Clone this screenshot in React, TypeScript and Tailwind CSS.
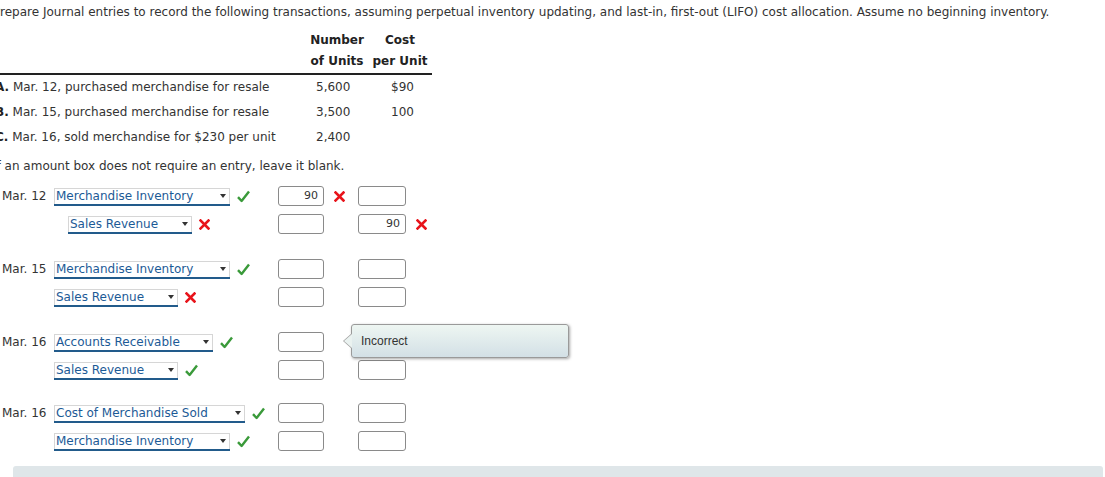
import React from 'react'

type Mark = 'ok' | 'bad' | null

interface Entry {
  date?: string
  account: string
  selectW: number
  indent?: boolean
  mark: Mark
  debit?: string
  debitMark?: Mark
  credit?: string
  creditMark?: Mark
}

const entries: Entry[][] = [
  [
    { date: 'Mar. 12', account: 'Merchandise Inventory', selectW: 176, mark: 'ok', debit: '90', debitMark: 'bad' },
    { account: 'Sales Revenue', selectW: 124, indent: true, mark: 'bad', credit: '90', creditMark: 'bad' },
  ],
  [
    { date: 'Mar. 15', account: 'Merchandise Inventory', selectW: 176, mark: 'ok' },
    { account: 'Sales Revenue', selectW: 124, mark: 'bad' },
  ],
  [
    { date: 'Mar. 16', account: 'Accounts Receivable', selectW: 159, mark: 'ok' },
    { account: 'Sales Revenue', selectW: 124, mark: 'ok' },
  ],
  [
    { date: 'Mar. 16', account: 'Cost of Merchandise Sold', selectW: 191, mark: 'ok' },
    { account: 'Merchandise Inventory', selectW: 176, mark: 'ok' },
  ],
]

function Check() {
  return (
    <svg width="13" height="13" viewBox="0 0 13 13">
      <path d="M1 7.2 L4.6 11 L12 1.5" fill="none" stroke="#3a9a3a" strokeWidth="2.4" strokeLinejoin="round" />
    </svg>
  )
}

function Cross() {
  return (
    <svg width="11" height="11" viewBox="0 0 11 11">
      <path d="M1.5 1.5 L9.5 9.5 M9.5 1.5 L1.5 9.5" stroke="#e8141b" strokeWidth="2.6" strokeLinecap="square" />
    </svg>
  )
}

function MarkIcon({ mark }: { mark?: Mark }) {
  if (mark === 'ok') return <Check />
  if (mark === 'bad') return <Cross />
  return null
}

function Select({ label, width }: { label: string; width: number }) {
  return (
    <div
      className="relative h-[17px] border border-[#d6d6d6] border-b-0 bg-white text-[#1c5a96]"
      style={{ width }}
    >
      <span className="block leading-[14px] pl-[1px] whitespace-nowrap">{label}</span>
      <span className="absolute right-[3px] top-[5px] w-0 h-0 border-l-[3.5px] border-r-[3.5px] border-t-[4px] border-l-transparent border-r-transparent border-t-[#333]" />
      <div className="absolute left-[-1px] right-[-1px] bottom-[-1px] h-[2px] bg-[#225b8b]" />
    </div>
  )
}

function Box({ value }: { value?: string }) {
  return (
    <div className="h-[20px] border border-[#8a8a8a] rounded-[3px] bg-white text-right pr-[5px] text-[11px] leading-[18px] text-[#333]">
      {value}
    </div>
  )
}

function Row({ e }: { e: Entry }) {
  return (
    <div className="flex items-center h-[28px]">
      <div className="w-[52px] text-[#333]">{e.date}</div>
      <div className={`w-[224px] flex items-center gap-[7px] ${e.indent ? 'pl-[14px]' : ''}`}>
        <Select label={e.account} width={e.selectW} />
        <MarkIcon mark={e.mark} />
      </div>
      <div className="w-[46px]">
        <Box value={e.debit} />
      </div>
      <div className="w-[34px] pl-[10px] flex items-center">
        <MarkIcon mark={e.debitMark} />
      </div>
      <div className="w-[48px]">
        <Box value={e.credit} />
      </div>
      <div className="pl-[10px] flex items-center">
        <MarkIcon mark={e.creditMark} />
      </div>
    </div>
  )
}

export default function App() {
  return (
    <div
      className="relative w-[1105px] h-[477px] overflow-hidden bg-white text-[12px] text-[#333]"
      style={{ fontFamily: '"DejaVu Sans", Verdana, sans-serif' }}
    >
      <div className="ml-[-7px]">
        {/* Question text */}
        <p className="pt-[4px] leading-[16px] whitespace-nowrap">
          Prepare Journal entries to record the following transactions, assuming perpetual inventory updating, and last-in, first-out (LIFO) cost allocation. Assume no beginning inventory.
        </p>

        {/* Transactions table */}
        <div className="w-[439px] mt-[10px]">
          <div className="flex border-b-2 border-[#222] pb-[1px] font-bold leading-[21px] text-[#222]">
            <div className="w-[313px]" />
            <div className="w-[62px] text-center">
              Number
              <br />
              of Units
            </div>
            <div className="w-[64px] text-center">
              Cost
              <br />
              per Unit
            </div>
          </div>
          {[
            ['A.', 'Mar. 12, purchased merchandise for resale', '5,600', '$90'],
            ['B.', 'Mar. 15, purchased merchandise for resale', '3,500', '100'],
            ['C.', 'Mar. 16, sold merchandise for $230 per unit', '2,400', ''],
          ].map(([l, d, n, c]) => (
            <div key={l} className="flex leading-[25px] whitespace-nowrap">
              <div className="w-[313px] pl-[2px]">
                <b className="text-[#222]">{l}</b> {d}
              </div>
              <div className="w-[62px] pl-[10px]">{n}</div>
              <div className="w-[46px] text-right">{c}</div>
            </div>
          ))}
        </div>

        <p className="mt-[7px] leading-[18px]">If an amount box does not require an entry, leave it blank.</p>

        {/* Journal */}
        <div className="pl-[9px] mt-[7px]">
          {entries.map((pair, i) => (
            <div key={i} className={i === 2 ? 'mb-[15px]' : 'mb-[17px]'}>
              {pair.map((e, j) => (
                <Row key={j} e={e} />
              ))}
            </div>
          ))}
        </div>
      </div>

      {/* Tooltip */}
      <div className="absolute left-[351px] top-[324px] w-[218px] h-[34px] rounded-[3px] border border-[#9a9a9a] bg-gradient-to-b from-[#eef6f2] to-[#d3e0e6] shadow-[1px_1px_3px_rgba(0,0,0,0.35)]">
        <div className="absolute left-[-9px] top-[8px] w-0 h-0 border-t-[8px] border-b-[8px] border-r-[9px] border-t-transparent border-b-transparent border-r-[#a0a0a0]" />
        <div className="absolute left-[-8px] top-[9px] w-0 h-0 border-t-[7px] border-b-[7px] border-r-[8px] border-t-transparent border-b-transparent border-r-[#eaf2f0]" />
        <span
          className="block pl-[9px] leading-[32px] text-[12px] text-[#333]"
          style={{ fontFamily: '"Liberation Sans", Arial, sans-serif' }}
        >
          Incorrect
        </span>
      </div>

      {/* Bottom panel */}
      <div className="absolute left-[13px] right-[2px] top-[466px] h-[20px] rounded-t-[3px] bg-[#dfe6e9]" />
    </div>
  )
}
